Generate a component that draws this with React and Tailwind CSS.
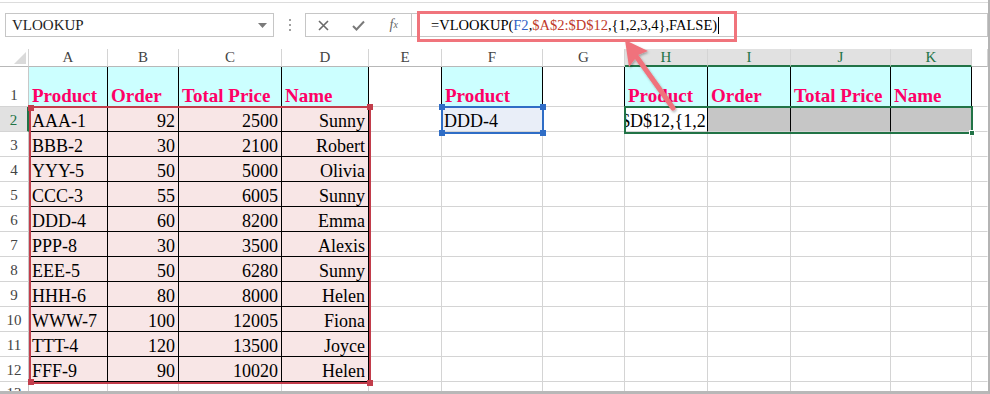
import React from 'react'

const SERIF = "font-['Liberation_Serif','Times_New_Roman',serif]"

const COLS = [
  'w-[79px]', 'w-[71px]', 'w-[103px]', 'w-[87px]', 'w-[73px]', 'w-[101px]',
  'w-[82px]', 'w-[83px]', 'w-[83px]', 'w-[100px]', 'w-[81px]', 'w-[16px]',
]
const LETTERS = ['A', 'B', 'C', 'D', 'E', 'F', 'G', 'H', 'I', 'J', 'K', '']

const DATA = [
  ['AAA-1', 92, 2500, 'Sunny'],
  ['BBB-2', 30, 2100, 'Robert'],
  ['YYY-5', 50, 5000, 'Olivia'],
  ['CCC-3', 55, 6005, 'Sunny'],
  ['DDD-4', 60, 8200, 'Emma'],
  ['PPP-8', 30, 3500, 'Alexis'],
  ['EEE-5', 50, 6280, 'Sunny'],
  ['HHH-6', 80, 8000, 'Helen'],
  ['WWW-7', 100, 12005, 'Fiona'],
  ['TTT-4', 120, 13500, 'Joyce'],
  ['FFF-9', 90, 10020, 'Helen'],
]

const HEADS = ['Product', 'Order', 'Total Price', 'Name']

// one grid cell; borders are set per side so colours never fight
function Cell({ i, h, right = 'border-r-[#d4d4d4]', bottom = 'border-b-[#d4d4d4]', className = '', children }) {
  return (
    <div
      className={`${COLS[i]} ${h} shrink-0 border-r border-b ${right} ${bottom} flex items-end overflow-hidden whitespace-nowrap ${className}`}
    >
      {children}
    </div>
  )
}

function RowHead({ n, h, active }) {
  return (
    <div
      className={`w-[29px] ${h} shrink-0 border-b border-b-[#d4d4d4] flex items-end justify-center text-[15px] leading-[22px] ${
        active
          ? 'bg-[#e1e1e1] text-[#217346] border-r-2 border-r-[#217346]'
          : 'text-[#444] border-r border-r-[#c8c8c8]'
      }`}
    >
      {n}
    </div>
  )
}

function Handle({ className }) {
  return <div className={`absolute w-[6px] h-[6px] ${className}`} />
}

export default function App() {
  const black = 'border-r-black'
  const blackB = 'border-b-black'
  const headText = 'text-[19px] leading-[20px] font-bold text-[#ff0066] pl-[3px]'
  const bodyText = 'text-[18px] leading-[20px] text-black'

  return (
    <div className={`w-[990px] h-[394px] bg-white relative overflow-hidden ${SERIF}`}>
      <div className="w-[990px] h-[394px] border-r-2 border-r-[#b4b4b4] border-b-[3px] border-b-[#b8b8b8]">
        {/* formula bar */}
        <div className="h-[49px] pt-[2px]">
          <div className="h-[47px] border-t border-t-[#dcdcdc] pt-[10px] flex items-start">
            <div className="ml-[5px] w-[269px] h-[24px] border border-[#c6c6c6] flex items-center justify-between pl-[6px] pr-[6px]">
              <span className="text-[15px] text-[#222] leading-none">VLOOKUP</span>
              <svg width="9" height="5" viewBox="0 0 9 5">
                <polygon points="0,0 9,0 4.5,5" fill="#7a7a7a" />
              </svg>
            </div>
            <div className="w-[31px] h-[24px] flex flex-col items-center justify-center gap-[3px]">
              <span className="w-[2px] h-[2px] bg-[#a0a0a0]" />
              <span className="w-[2px] h-[2px] bg-[#a0a0a0]" />
              <span className="w-[2px] h-[2px] bg-[#a0a0a0]" />
            </div>
            <div className="w-[107px] h-[24px] border border-[#c6c6c6] flex items-center">
              <div className="w-[35px] flex justify-center">
                <svg width="11" height="11" viewBox="0 0 11 11">
                  <path d="M1 1 L10 10 M10 1 L1 10" stroke="#6a6a6a" strokeWidth="1.6" />
                </svg>
              </div>
              <div className="w-[36px] flex justify-center">
                <svg width="13" height="11" viewBox="0 0 13 11">
                  <path d="M1 6 L4.5 9.5 L12 1.5" stroke="#7a7a7a" strokeWidth="2" fill="none" />
                </svg>
              </div>
              <div className="w-[35px] flex justify-center text-[14px] italic text-[#666] leading-none">
                f<span className="text-[10px] relative top-[2px]">x</span>
              </div>
            </div>
            <div className="flex-1 h-[24px] border-y border-r border-[#c6c6c6] flex items-center pl-[19px]">
              <span className="text-[14.5px] leading-none text-black">
                =VLOOKUP(<span className="text-[#2f5fc4]">F2</span>,
                <span className="text-[#c0392b]">$A$2:$D$12</span>,{'{1,2,3,4}'},FALSE)
              </span>
              <span className="ml-[1px] w-px h-[17px] bg-black" />
            </div>
          </div>
        </div>

        {/* sheet */}
        <div className="relative">
          {/* column letters */}
          <div className="flex h-[18px]">
            <div className="w-[29px] shrink-0 border-r border-b border-r-[#d4d4d4] border-b-[#b8b8b8] flex items-end justify-end p-[2px]">
              <svg width="12" height="12" viewBox="0 0 12 12">
                <polygon points="12,0 12,12 0,12" fill="#dadada" />
              </svg>
            </div>
            {LETTERS.map((l, i) => {
              const sel = i >= 7 && i <= 10
              return (
                <div
                  key={i}
                  className={`${COLS[i]} shrink-0 border-r border-r-[#d4d4d4] flex items-center justify-center text-[15px] leading-none ${
                    sel
                      ? 'bg-[#e1e1e1] text-[#217346] border-b-2 border-b-[#217346]'
                      : 'text-[#444] border-b border-b-[#b8b8b8]'
                  }`}
                >
                  {l}
                </div>
              )
            })}
          </div>

          {/* row 1 */}
          <div className="flex">
            <RowHead n={1} h="h-[40px]" />
            {HEADS.map((t, i) => (
              <Cell key={i} i={i} h="h-[40px]" right={black} bottom={blackB} className={`bg-[#ccffff] ${headText}`}>
                {t}
              </Cell>
            ))}
            <Cell i={4} h="h-[40px]" right={black} />
            <Cell i={5} h="h-[40px]" right={black} className={`bg-[#ccffff] ${headText}`}>
              Product
            </Cell>
            <Cell i={6} h="h-[40px]" right={black} />
            {HEADS.map((t, i) => (
              <Cell key={i} i={i + 7} h="h-[40px]" right={black} bottom={blackB} className={`bg-[#ccffff] ${headText} pl-[1px]`}>
                {t}
              </Cell>
            ))}
            <Cell i={11} h="h-[40px]" right="border-r-transparent" />
          </div>

          {/* data rows */}
          {DATA.map((row, r) => {
            const n = r + 2
            const first = r === 0
            return (
              <div key={n} className="flex">
                <RowHead n={n} h="h-[25px]" active={first} />
                {row.map((v, i) => (
                  <Cell
                    key={i}
                    i={i}
                    h="h-[25px]"
                    right={black}
                    bottom={blackB}
                    className={`bg-[#f8e6e6] ${bodyText} ${i === 0 ? 'pl-[3px]' : 'justify-end pr-[3px]'}`}
                  >
                    {v}
                  </Cell>
                ))}
                <Cell i={4} h="h-[25px]" />
                {first ? (
                  <>
                    <Cell i={5} h="h-[25px]" className={`bg-[#e9eef8] ${bodyText} pl-[2px]`}>
                      DDD-4
                    </Cell>
                    <Cell i={6} h="h-[25px]" />
                    <Cell i={7} h="h-[25px]" right={black} className={`bg-white ${bodyText}`}>
                      <span className="-ml-[4px]">$D$12,{'{1,2'}</span>
                    </Cell>
                    <Cell i={8} h="h-[25px]" right={black} className="bg-[#c6c6c6]" />
                    <Cell i={9} h="h-[25px]" right={black} className="bg-[#c6c6c6]" />
                    <Cell i={10} h="h-[25px]" className="bg-[#c6c6c6]" />
                  </>
                ) : (
                  [5, 6, 7, 8, 9, 10].map((i) => <Cell key={i} i={i} h="h-[25px]" />)
                )}
                <Cell i={11} h="h-[25px]" right="border-r-transparent" />
              </div>
            )
          })}

          {/* row 13, cut off by the window edge */}
          <div className="flex">
            <div className="w-[29px] h-[9px] shrink-0 border-r border-r-[#c8c8c8] overflow-hidden flex justify-center text-[15px] leading-[22px] text-[#444]">
              13
            </div>
            {COLS.map((w, i) => (
              <div key={i} className={`${w} h-[9px] shrink-0 border-r ${i === 11 ? 'border-r-transparent' : 'border-r-[#d4d4d4]'}`} />
            ))}
          </div>

          {/* range highlight A2:D12 */}
          <div className="absolute left-[29px] top-[57px] w-[342px] h-[278px] border-2 border-[#c23d4b] pointer-events-none">
            <Handle className="-left-[3px] -top-[3px] bg-[#c23d4b]" />
            <Handle className="-right-[4px] -top-[4px] bg-[#c23d4b]" />
            <Handle className="-left-[3px] -bottom-[3px] bg-[#c23d4b]" />
            <Handle className="-right-[4px] -bottom-[4px] bg-[#c23d4b]" />
          </div>

          {/* F2 reference */}
          <div className="absolute left-[441px] top-[57px] w-[103px] h-[28px] border-2 border-[#2f6dc6] pointer-events-none">
            <Handle className="-left-[4px] -top-[4px] bg-[#2f6dc6]" />
            <Handle className="-right-[4px] -top-[4px] bg-[#2f6dc6]" />
            <Handle className="-left-[4px] -bottom-[4px] bg-[#2f6dc6]" />
            <Handle className="-right-[4px] -bottom-[4px] bg-[#2f6dc6]" />
          </div>

          {/* selection H2:K2 */}
          <div className="absolute left-[624px] top-[57px] w-[349px] h-[28px] border-2 border-[#217346] pointer-events-none">
            <Handle className="-right-[4px] -bottom-[4px] bg-[#217346] border border-white" />
          </div>
        </div>
      </div>

      {/* callout box round the formula */}
      <div className="absolute left-[417px] top-[11px] w-[320px] h-[31px] border-[3px] border-[#f0747c] pointer-events-none" />

      {/* arrow */}
      <svg className="absolute left-0 top-0 pointer-events-none" width="990" height="394">
        <defs>
          <filter id="sh" x="-20%" y="-20%" width="140%" height="140%">
            <feDropShadow dx="1" dy="1.5" stdDeviation="1.3" floodColor="#000" floodOpacity="0.3" />
          </filter>
        </defs>
        <g filter="url(#sh)">
          <line x1="673" y1="108" x2="636" y2="56" stroke="#f0727c" strokeWidth="5" strokeLinecap="round" />
          <polygon points="625,40 648,51 638,55 629,67" fill="#f0727c" />
        </g>
      </svg>
    </div>
  )
}
